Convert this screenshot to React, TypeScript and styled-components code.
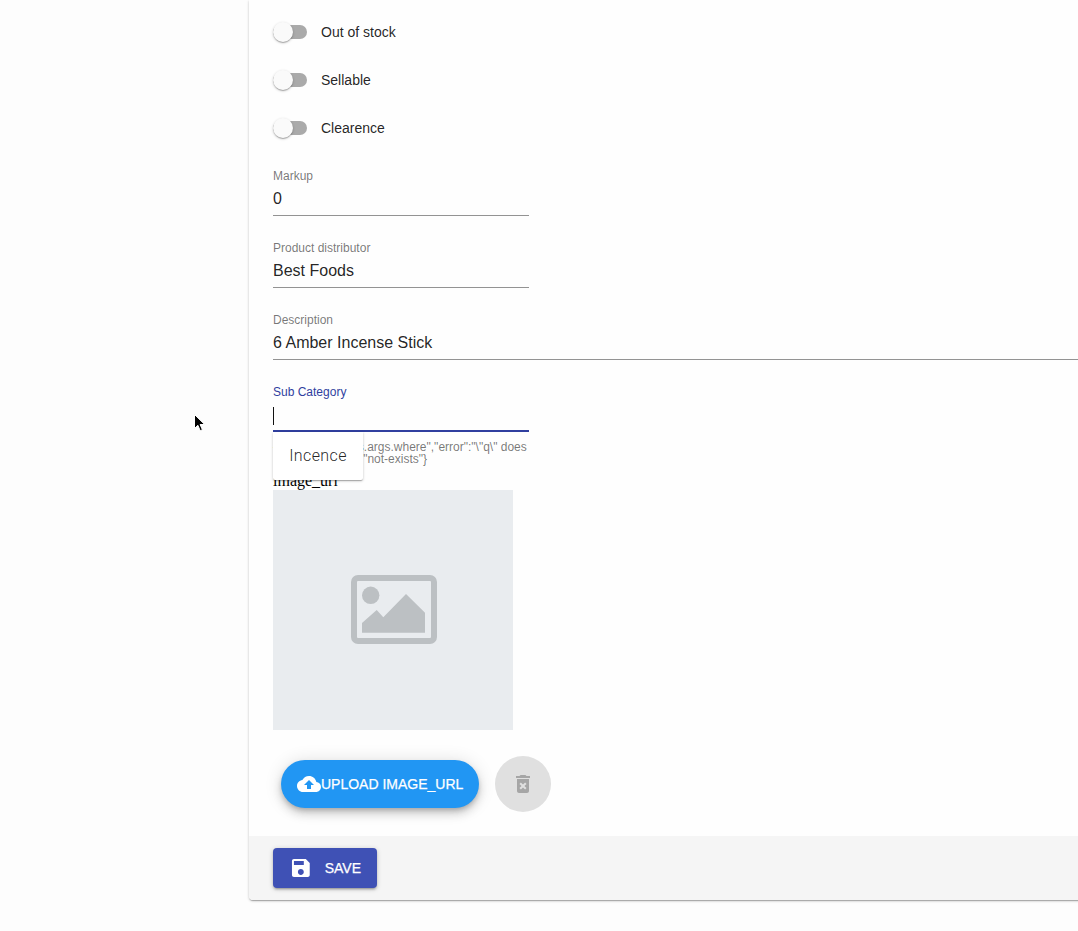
import React from "react";
import styled, { createGlobalStyle } from "styled-components";

const Global = createGlobalStyle`
  html, body { margin: 0; padding: 0; height: 100%; overflow: hidden; background: #fdfdfd; }
  #root { height: 100%; }
  * { box-sizing: border-box; }
`;

const Page = styled.div`
  position: relative;
  height: 931px;
  width: 1078px;
  padding-left: 249px;
  overflow: hidden;
  font-family: "Liberation Sans", Roboto, sans-serif;
`;

const Card = styled.div`
  width: 860px;
  height: 900px;
  display: flex;
  flex-direction: column;
  background: #fefefe;
  border-radius: 0 0 4px 4px;
  box-shadow: 0 1px 3px rgba(0, 0, 0, 0.2), 0 1px 1px rgba(0, 0, 0, 0.14), 0 2px 1px -1px rgba(0, 0, 0, 0.12);
`;

const Form = styled.div`
  flex: 1;
  padding: 8px 0 0 24px;
  width: 829px;
`;

const SwitchRow = styled.label`
  height: 48px;
  display: flex;
  align-items: center;
  gap: 14px;
  font-size: 14px;
  color: rgba(0, 0, 0, 0.87);
`;

const SwitchControl = styled.span`
  position: relative;
  width: 34px;
  height: 14px;
  border-radius: 7px;
  background: #aaaaaa;
`;

const Thumb = styled.span`
  position: absolute;
  left: 0;
  top: -3px;
  width: 20px;
  height: 20px;
  border-radius: 50%;
  background: #fafafa;
  box-shadow: 0 1px 3px rgba(0, 0, 0, 0.2), 0 1px 1px rgba(0, 0, 0, 0.14), 0 2px 1px -1px rgba(0, 0, 0, 0.12);
`;

const Field = styled.div<{ $wide?: boolean; $first?: boolean }>`
  position: relative;
  width: ${(p) => (p.$wide ? "100%" : "256px")};
  margin-top: ${(p) => (p.$first ? "16px" : "24px")};
`;

const FieldLabel = styled.div<{ $active?: boolean }>`
  height: 15px;
  font-size: 12px;
  line-height: 17px;
  color: ${(p) => (p.$active ? "#303f9f" : "rgba(0, 0, 0, 0.54)")};
`;

const Input = styled.div<{ $active?: boolean }>`
  height: 33px;
  padding-top: 6px;
  font-size: 16px;
  line-height: 20px;
  color: rgba(0, 0, 0, 0.87);
  border-bottom: ${(p) => (p.$active ? "2px solid #303f9f" : "1px solid rgba(0, 0, 0, 0.42)")};
`;

const Caret = styled.span`
  display: block;
  width: 1px;
  height: 18px;
  margin-top: 2px;
  background: #111;
`;

const Helper = styled.div`
  width: 256px;
  margin-top: 9px;
  height: 23px;
  font-size: 12px;
  line-height: 12px;
  color: rgba(0, 0, 0, 0.54);
`;

const Menu = styled.div`
  position: absolute;
  left: 0;
  top: 48px;
  width: 90px;
  height: 48px;
  padding-bottom: 2px;
  display: flex;
  align-items: center;
  justify-content: center;
  background: #fff;
  font-family: Roboto, sans-serif;
  font-size: 16px;
  font-weight: 300;
  letter-spacing: 0.4px;
  color: rgba(0, 0, 0, 0.87);
  border-radius: 0 0 2px 2px;
  box-shadow: 0 1px 3px rgba(0, 0, 0, 0.2), 0 1px 1px rgba(0, 0, 0, 0.14), 0 2px 1px -1px rgba(0, 0, 0, 0.12);
`;

const ImageLabel = styled.div`
  margin-top: 8px;
  height: 18px;
  font-family: "Liberation Serif", serif;
  font-size: 16px;
  line-height: 18px;
  color: #000;
`;

const Placeholder = styled.div`
  width: 240px;
  height: 240px;
  padding-left: 2px;
  display: flex;
  align-items: center;
  justify-content: center;
  background: #e9ecef;
`;

const Actions = styled.div`
  margin-top: 26px;
  padding-left: 8px;
  display: flex;
  align-items: center;
  gap: 16px;
`;

const UploadButton = styled.button`
  height: 48px;
  padding: 0 16px;
  display: flex;
  align-items: center;
  border: 0;
  border-radius: 24px;
  background: #2196f3;
  color: #fff;
  font-family: inherit;
  font-size: 14px;
  font-weight: 400;
  -webkit-text-stroke: 0.25px #fff;
  box-shadow: 0 3px 5px -1px rgba(0, 0, 0, 0.2), 0 6px 10px 0 rgba(0, 0, 0, 0.14), 0 1px 18px 0 rgba(0, 0, 0, 0.12);
`;

const RoundButton = styled.button`
  width: 56px;
  height: 56px;
  display: flex;
  align-items: center;
  justify-content: center;
  border: 0;
  border-radius: 50%;
  background: #e0e0e0;
  color: rgba(0, 0, 0, 0.26);
`;

const Toolbar = styled.div`
  height: 64px;
  padding: 12px 24px;
  background: #f5f5f5;
  border-radius: 0 0 4px 4px;
`;

const SaveButton = styled.button`
  width: 104px;
  height: 40px;
  padding: 0 16px;
  display: flex;
  align-items: center;
  gap: 12px;
  border: 0;
  border-radius: 4px;
  background: #3f51b5;
  color: #fff;
  font-family: inherit;
  font-size: 14px;
  font-weight: 400;
  -webkit-text-stroke: 0.25px #fff;
  box-shadow: 0 1px 5px rgba(0, 0, 0, 0.2), 0 2px 2px rgba(0, 0, 0, 0.14), 0 3px 1px -2px rgba(0, 0, 0, 0.12);
`;

const Pointer = styled.svg`
  position: absolute;
  left: 192px;
  top: 412px;
`;

const Toggle = ({ label }: { label: string }) => (
  <SwitchRow>
    <SwitchControl>
      <Thumb />
    </SwitchControl>
    {label}
  </SwitchRow>
);

export default function App() {
  return (
    <Page>
      <Global />
      <Card>
        <Form>
          <Toggle label="Out of stock" />
          <Toggle label="Sellable" />
          <Toggle label="Clearence" />
          <Field $first>
            <FieldLabel>Markup</FieldLabel>
            <Input>0</Input>
          </Field>
          <Field>
            <FieldLabel>Product distributor</FieldLabel>
            <Input>Best Foods</Input>
          </Field>
          <Field $wide>
            <FieldLabel>Description</FieldLabel>
            <Input>6 Amber Incense Stick</Input>
          </Field>
          <Field>
            <FieldLabel $active>Sub Category</FieldLabel>
            <Input $active>
              <Caret />
            </Input>
            <Helper>{'{"path":"$.selects.args.where","error":"\\"q\\" does not exist","code":"not-exists"}'}</Helper>
            <Menu>Incence</Menu>
          </Field>
          <ImageLabel>image_url</ImageLabel>
          <Placeholder>
            <svg width="86" height="70" viewBox="0 0 86 70">
              <rect x="3" y="3" width="80" height="63" rx="4" fill="none" stroke="#bcc0c3" strokeWidth="6" />
              <circle cx="19.7" cy="20.3" r="8.7" fill="#bcc0c3" />
              <path d="M11 57.7V48L25.7 35l6.6 7.3L55 19l19 18.7v20z" fill="#bcc0c3" />
            </svg>
          </Placeholder>
          <Actions>
            <UploadButton>
              <svg width="24" height="24" viewBox="0 0 24 24" fill="currentColor">
                <path d="M19.35 10.04C18.67 6.59 15.64 4 12 4 9.11 4 6.6 5.64 5.35 8.04 2.34 8.36 0 10.91 0 14c0 3.31 2.69 6 6 6h13c2.76 0 5-2.24 5-5 0-2.64-2.05-4.78-4.65-4.96zM14 13v4h-4v-4H7l5-5 5 5h-3z" />
              </svg>
              UPLOAD IMAGE_URL
            </UploadButton>
            <RoundButton>
              <svg width="24" height="24" viewBox="0 0 24 24" fill="currentColor">
                <path d="M6 19c0 1.1.9 2 2 2h8c1.1 0 2-.9 2-2V7H6v12zm2.46-7.12l1.41-1.41L12 12.59l2.12-2.12 1.41 1.41L13.41 14l2.12 2.12-1.41 1.41L12 15.41l-2.12 2.12-1.41-1.41L10.59 14l-2.13-2.12zM15.5 4l-1-1h-5l-1 1H5v2h14V4z" />
              </svg>
            </RoundButton>
          </Actions>
        </Form>
        <Toolbar>
          <SaveButton>
            <svg width="24" height="24" viewBox="0 0 24 24" fill="currentColor">
              <path d="M17 3H5c-1.11 0-2 .9-2 2v14c0 1.1.89 2 2 2h14c1.1 0 2-.9 2-2V7l-4-4zm-5 16c-1.66 0-3-1.34-3-3s1.34-3 3-3 3 1.34 3 3-1.34 3-3 3zm3-10H5V5h10v4z" />
            </svg>
            SAVE
          </SaveButton>
        </Toolbar>
      </Card>
      <Pointer width="14" height="22" viewBox="0 0 14 22">
        <path d="M2.5 2.5v14l3.4-3.2 2.3 5.4 2.2-1-2.3-5.2h4.6z" fill="#000" stroke="#fff" strokeWidth="1" />
      </Pointer>
    </Page>
  );
}
